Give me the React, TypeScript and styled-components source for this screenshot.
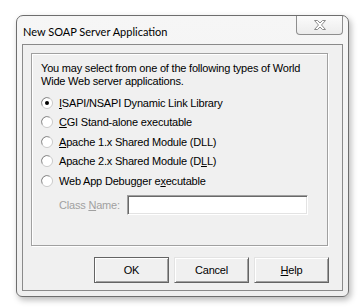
import React from "react";
import styled, { createGlobalStyle } from "styled-components";

const Global = createGlobalStyle`
  html, body { margin: 0; padding: 0; background: #ffffff; }
  body { font-family: "Liberation Sans", Arial, sans-serif; }
`;

const Page = styled.div`
  padding: 15px 0 0 16px;
  width: 358px;
  height: 307px;
  box-sizing: border-box;
`;

const Window = styled.div`
  width: 333px;
  height: 282px;
  box-sizing: border-box;
  border: 1px solid #6e6e6e;
  border-radius: 7px 7px 6px 6px;
  background: linear-gradient(#f6f6f6, #efefef);
  box-shadow: 2px 3px 6px rgba(0, 0, 0, 0.28);
  display: flex;
  flex-direction: column;
`;

const TitleBar = styled.div`
  height: 28px;
  display: flex;
  align-items: center;
  justify-content: space-between;
  padding: 0 5px 0 6px;
  flex: none;
`;

const Title = styled.span`
  font-family: Lato, "Noto Sans", sans-serif;
  font-size: 11px;
  color: #000;
  padding-top: 2px;
`;

const CloseButton = styled.div`
  align-self: flex-start;
  width: 47px;
  height: 19px;
  box-sizing: border-box;
  border: 1px solid #8e8e8e;
  border-top: none;
  border-radius: 0 0 4px 4px;
  background: linear-gradient(#fbfbfb, #ececec);
  display: flex;
  align-items: center;
  justify-content: center;
`;

const Client = styled.div`
  margin: 0 5px 5px 5px;
  flex: 1;
  border: 1px solid #8a8a8a;
  background: #f0f0f0;
  padding: 8px 0 0 8px;
  display: flex;
  flex-direction: column;
  font-size: 11px;
  letter-spacing: -0.2px;
`;

const GroupBox = styled.div`
  width: 297px;
  height: 193px;
  box-sizing: border-box;
  border: 1px solid #a0a0a0;
  box-shadow: inset 1px 1px 0 #ffffff, 1px 1px 0 #ffffff;
  padding: 8px 0 0 9px;
  display: flex;
  flex-direction: column;
`;

const Description = styled.div`
  line-height: 13px;
  color: #000;
  margin-bottom: 5px;
`;

const RadioRow = styled.label`
  display: flex;
  align-items: center;
  height: 19.5px;
  gap: 6px;
  color: #000;
`;

const ClassRow = styled.div`
  display: flex;
  align-items: center;
  margin-top: 4px;
  padding-left: 18px;
  gap: 7px;
`;

const DisabledLabel = styled.span`
  color: #a0a0a0;
`;

const Input = styled.div`
  width: 181px;
  height: 20px;
  box-sizing: border-box;
  background: #ffffff;
  border-top: 1px solid #a0a0a0;
  border-left: 1px solid #a0a0a0;
  border-right: 1px solid #ffffff;
  border-bottom: 1px solid #ffffff;
  box-shadow: inset 1px 1px 0 #696969, inset -1px -1px 0 #e3e3e3;
`;

const ButtonRow = styled.div`
  display: flex;
  justify-content: flex-end;
  gap: 5px;
  margin-top: 11px;
  padding-right: 13px;
`;

const Button = styled.div<{ $default?: boolean }>`
  width: 75px;
  height: 26px;
  box-sizing: border-box;
  display: flex;
  align-items: center;
  justify-content: center;
  color: #000;
  background: #f0f0f0;
  border: 1px solid #646464;
  border-top-color: ${(p) => (p.$default ? "#646464" : "#e3e3e3")};
  border-left-color: ${(p) => (p.$default ? "#646464" : "#e3e3e3")};
  box-shadow: inset 1px 1px 0 #ffffff, inset -1px -1px 0 #a0a0a0;
`;

const U = styled.span`
  text-decoration: underline;
`;

const Radio = ({ checked }: { checked?: boolean }) => (
  <svg width="12" height="12" viewBox="0 0 12 12">
    <circle cx="6" cy="6" r="5.5" fill="#ffffff" stroke="#c8c8c8" />
    <path d="M1.3 8.5 A5.3 5.3 0 0 1 8.5 1.3" fill="none" stroke="#8a8a8a" strokeWidth="1" />
    <circle cx="6" cy="6" r="4.5" fill="#ffffff" stroke="none" />
    {checked && <circle cx="6" cy="6" r="2" fill="#000" />}
  </svg>
);

const CloseIcon = () => (
  <svg width="12" height="10" viewBox="0 0 12 10">
    <path
      d="M0.5 0.5 H3.5 L6 3 L8.5 0.5 H11.5 L7.5 5 L11.5 9.5 H8.5 L6 7 L3.5 9.5 H0.5 L4.5 5 Z"
      fill="#ffffff"
      stroke="#8c8c8c"
      strokeWidth="1"
      strokeLinejoin="round"
    />
  </svg>
);

const options: { pre: string; u: string; post: string; checked?: boolean }[] = [
  { pre: "", u: "I", post: "SAPI/NSAPI Dynamic Link Library", checked: true },
  { pre: "", u: "C", post: "GI Stand-alone executable" },
  { pre: "", u: "A", post: "pache 1.x Shared Module (DLL)" },
  { pre: "Apache 2.x Shared Module (D", u: "L", post: "L)" },
  { pre: "Web App Debugger e", u: "x", post: "ecutable" },
];

export default function App() {
  return (
    <Page>
      <Global />
      <Window>
        <TitleBar>
          <Title>New SOAP Server Application</Title>
          <CloseButton>
            <CloseIcon />
          </CloseButton>
        </TitleBar>
        <Client>
          <GroupBox>
            <Description>
              You may select from one of the following types of World
              <br />
              Wide Web server applications.
            </Description>
            {options.map((o, i) => (
              <RadioRow key={i}>
                <Radio checked={o.checked} />
                <span>
                  {o.pre}
                  <U>{o.u}</U>
                  {o.post}
                </span>
              </RadioRow>
            ))}
            <ClassRow>
              <DisabledLabel>
                Class <U>N</U>ame:
              </DisabledLabel>
              <Input />
            </ClassRow>
          </GroupBox>
          <ButtonRow>
            <Button $default>OK</Button>
            <Button>Cancel</Button>
            <Button>
              <span>
                <U>H</U>elp
              </span>
            </Button>
          </ButtonRow>
        </Client>
      </Window>
    </Page>
  );
}
